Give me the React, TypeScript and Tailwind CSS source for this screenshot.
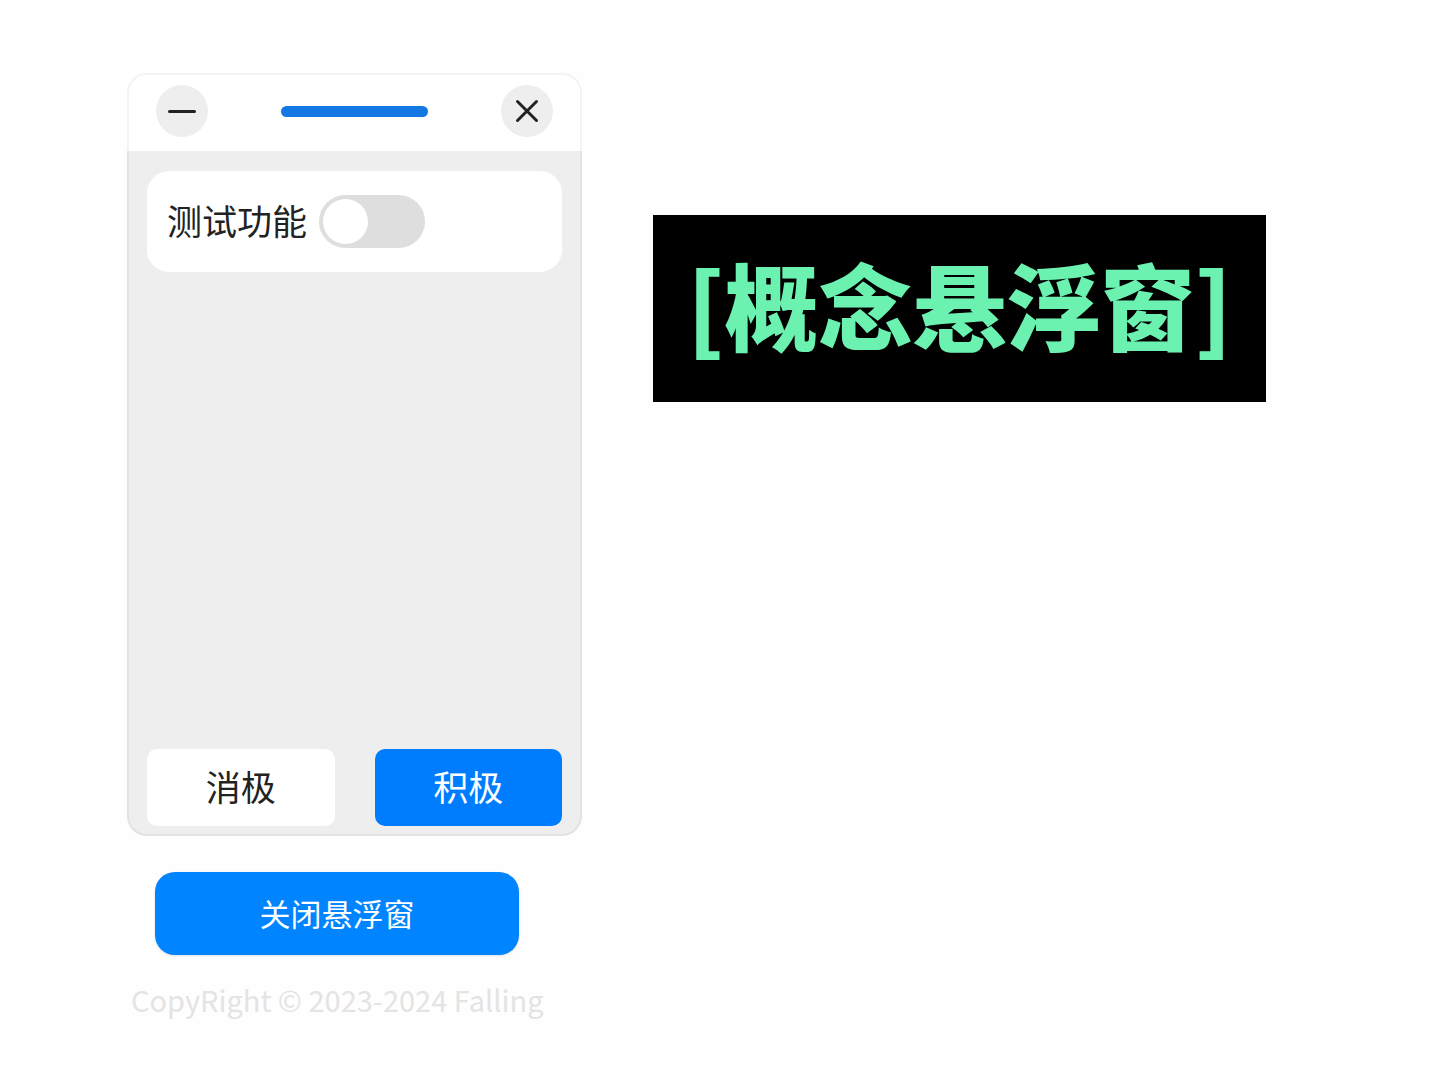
import { useState } from "react";

export default function App() {
  const [enabled, setEnabled] = useState(false);

  return (
    <main className="flex min-h-screen flex-wrap items-start gap-x-[71px] bg-[#fefefe] pt-[73px] pl-[127px] font-['Noto_Sans_CJK_SC',sans-serif] text-[#222]">
      <div className="w-full max-w-[455px]">
        <section>
          <header className="flex items-center justify-between rounded-t-[20px] border-2 border-b-0 border-[#f3f3f3] bg-white px-[27px] pt-[10px] pb-[14px]">
            <button
              type="button"
              aria-label="最小化"
              className="flex size-[52px] items-center justify-center rounded-full bg-[#eeeeee]"
            >
              <svg width="30" height="30" viewBox="0 0 30 30" fill="none" stroke="currentColor" strokeWidth="3" strokeLinecap="round">
                <path d="M2.5 15.5h25" />
              </svg>
            </button>
            <div className="h-[11px] w-[147px] rounded-full bg-[#1478e4]" />
            <button
              type="button"
              aria-label="关闭"
              className="flex size-[52px] items-center justify-center rounded-full bg-[#eeeeee]"
            >
              <svg width="30" height="30" viewBox="0 0 30 30" fill="none" stroke="currentColor" strokeWidth="3" strokeLinecap="round">
                <path d="M5.5 5.5l19 19M24.5 5.5l-19 19" />
              </svg>
            </button>
          </header>

          <div className="flex flex-col rounded-b-[20px] border-2 border-t-0 border-[#e2e2e2] bg-[#eeeeee] px-[18px] pt-5 pb-2">
            <label className="flex items-center gap-3 rounded-[22px] bg-white px-5 py-6">
              <span className="pb-1 text-[35px] leading-[46px]">测试功能</span>
              <input
                type="checkbox"
                role="switch"
                checked={enabled}
                onChange={(e) => setEnabled(e.target.checked)}
                className="h-[53px] w-[106px] appearance-none rounded-full bg-[#dedede] p-1 before:block before:size-[45px] before:rounded-full before:bg-white checked:bg-[#007dff] checked:before:ml-auto"
              />
            </label>

            <div className="mt-[477px] flex gap-10">
              <button type="button" className="h-[77px] flex-1 rounded-[10px] bg-white pb-0.5 text-[35px]">
                消极
              </button>
              <button type="button" className="h-[77px] flex-1 rounded-[10px] bg-[#007dff] pb-0.5 text-[35px] text-white">
                积极
              </button>
            </div>
          </div>
        </section>

        <button
          type="button"
          className="mt-9 ml-7 h-[83px] w-4/5 rounded-[20px] bg-[#0084ff] text-[31px] text-white shadow-sm"
        >
          关闭悬浮窗
        </button>
        <p className="mt-6 ml-1 text-[29px] leading-10 whitespace-nowrap text-[#e5e3e3]">
          CopyRight © 2023-2024 Falling
        </p>
      </div>

      <h1 className="mt-[142px] bg-black px-[34px] pt-[18px] pb-[29px] text-center text-[94px] leading-[140px] font-black whitespace-nowrap text-[#6cf2b0]">
        [概念悬浮窗]
      </h1>
    </main>
  );
}
